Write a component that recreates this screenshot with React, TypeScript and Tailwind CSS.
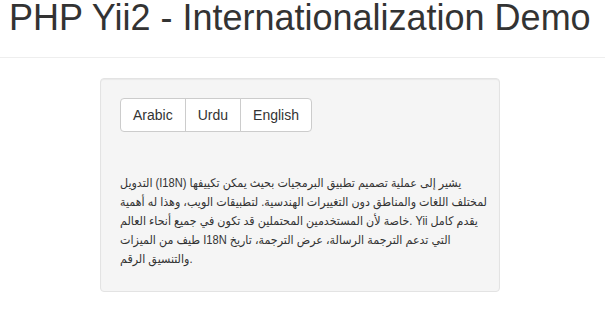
import React from "react";

const lines = [
  "التدويل (I18N) يشير إلى عملية تصميم تطبيق البرمجيات بحيث يمكن تكييفها",
  "لمختلف اللغات والمناطق دون التغييرات الهندسية. لتطبيقات الويب، وهذا له أهمية",
  "خاصة لأن المستخدمين المحتملين قد تكون في جميع أنحاء العالم. Yii يقدم كامل",
  "طيف من الميزات I18N التي تدعم الترجمة الرسالة، عرض الترجمة، تاريخ",
  "والتنسيق الرقم.",
];

export default function App() {
  return (
    <div
      className="w-[605px] h-[318px] bg-white text-[#333] overflow-hidden"
      style={{ fontFamily: '"Liberation Sans", "DejaVu Sans", Arial, sans-serif' }}
    >
      <div className="border-b border-[#eee] pb-[19px]">
        <h1 className="-mt-[2px] pl-[9px] text-[36px] leading-[40px] font-normal whitespace-nowrap">
          PHP Yii2 - Internationalization Demo
        </h1>
      </div>
      <div className="mt-[20px] ml-[100px] w-[400px] h-[214px] bg-[#f5f5f5] border border-[#e3e3e3] rounded-[4px] shadow-[inset_0_1px_1px_rgba(0,0,0,0.05)] p-[19px] pb-[22px]">
        <div className="flex w-max">
          {["Arabic", "Urdu", "English"].map((l, i) => (
            <button
              key={l}
              className={
                "h-[34px] px-[12px] bg-white border border-[#ccc] text-[14px] leading-[20px] text-[#333] " +
                (i === 0 ? "rounded-l-[4px] " : "-ml-px ") +
                (i === 2 ? "rounded-r-[4px]" : "")
              }
            >
              {l}
            </button>
          ))}
        </div>
        <div className="mt-[42px] text-[12px] leading-[19px]">
          {lines.map((t, i) => (
            <div key={i} className="whitespace-nowrap origin-left scale-x-[0.925]" dir="ltr">
              {t}
            </div>
          ))}
        </div>
      </div>
    </div>
  );
}
